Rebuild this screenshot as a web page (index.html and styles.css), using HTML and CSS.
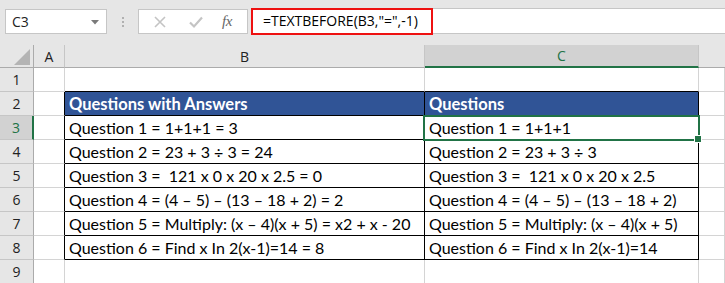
FILE: index.html
```html
<!DOCTYPE html>
<html>
<head>
<meta charset="utf-8">
<link rel="stylesheet" href="styles.css">
</head>
<body>
<div class="app">
  <div class="fbar">
    <div class="namebox"><span class="nb-text">C3</span><svg class="nb-arrow" width="8" height="5" viewBox="0 0 8 5"><path d="M0 0H8L4 4.5Z" fill="#7a7a7a"/></svg></div>
    <div class="grip"><i></i><i></i><i></i></div>
    <div class="fxbox">
      <svg class="ic" width="14" height="14" viewBox="0 0 14 14"><path d="M2 2L12 12M12 2L2 12" stroke="#c4c4c4" stroke-width="1.6"/></svg>
      <svg class="ic" width="16" height="14" viewBox="0 0 16 14"><path d="M2 7.5L6 11.5L14 2.5" stroke="#c4c4c4" stroke-width="2.2" fill="none"/></svg>
      <span class="fx">fx</span>
    </div>
    <div class="finput"><div class="hl">=TEXTBEFORE(B3,"=",-1)</div></div>
  </div>
  <div class="sheet">
    <div class="h corner"><span class="tri"></span></div>
    <div class="h ch">A</div>
    <div class="h ch">B</div>
    <div class="h ch sel">C</div>
    <div class="h ch last"></div>

    <div class="h rh">1</div>
    <div class="c"></div>
    <div class="c bb"></div>
    <div class="c bb"></div>
    <div class="c"></div>

    <div class="h rh">2</div>
    <div class="c br"></div>
    <div class="c t th">Questions with Answers</div>
    <div class="c t th">Questions</div>
    <div class="c"></div>

    <div class="h rh rsel">3</div>
    <div class="c br"></div>
    <div class="c t">Question 1 = 1+1+1 = 3</div>
    <div class="c t active">Question 1 = 1+1+1<span class="handle"></span></div>
    <div class="c"></div>

    <div class="h rh">4</div>
    <div class="c br"></div>
    <div class="c t">Question 2 = 23 + 3 ÷ 3 = 24</div>
    <div class="c t">Question 2 = 23 + 3 ÷ 3</div>
    <div class="c"></div>

    <div class="h rh">5</div>
    <div class="c br"></div>
    <div class="c t">Question 3 =&nbsp; 121 x 0 x 20 x 2.5 = 0</div>
    <div class="c t">Question 3 =&nbsp; 121 x 0 x 20 x 2.5</div>
    <div class="c"></div>

    <div class="h rh">6</div>
    <div class="c br"></div>
    <div class="c t">Question 4 = (4 – 5) – (13 – 18 + 2) = 2</div>
    <div class="c t">Question 4 = (4 – 5) – (13 – 18 + 2)</div>
    <div class="c"></div>

    <div class="h rh">7</div>
    <div class="c br"></div>
    <div class="c t">Question 5 = Multiply: (x – 4)(x + 5) = x2 + x - 20</div>
    <div class="c t">Question 5 = Multiply: (x – 4)(x + 5)</div>
    <div class="c"></div>

    <div class="h rh">8</div>
    <div class="c br"></div>
    <div class="c t">Question 6 = Find x In 2(x-1)=14 = 8</div>
    <div class="c t">Question 6 = Find x In 2(x-1)=14</div>
    <div class="c"></div>

    <div class="h rh">9</div>
    <div class="c"></div>
    <div class="c"></div>
    <div class="c"></div>
    <div class="c"></div>
  </div>
</div>
</body>
</html>
```

FILE: styles.css
```css
* { box-sizing: border-box; }
html, body { margin: 0; padding: 0; background: #fff; overflow: hidden; }
.app { width: 725px; height: 283px; overflow: hidden; font-family: "Segoe UI", "Open Sans", "Liberation Sans", sans-serif; }

.fbar {
  height: 45px;
  background: #e6e6e6;
  display: flex;
  align-items: flex-start;
  padding-top: 9px;
  padding-left: 5px;
}
.namebox {
  width: 102px;
  height: 25px;
  background: #fff;
  border: 1px solid #c6c6c6;
  display: flex;
  align-items: center;
  justify-content: space-between;
  padding: 0 7px 0 6px;
  font-size: 14px;
  color: #222;
}
.nb-arrow { margin-top: 1px; }
.grip {
  width: 31px;
  height: 25px;
  display: flex;
  flex-direction: column;
  align-items: center;
  justify-content: center;
  gap: 2px;
}
.grip i { width: 2px; height: 2px; background: #b0b0b0; display: block; }
.fxbox {
  width: 110px;
  height: 25px;
  background: #fff;
  border: 1px solid #c6c6c6;
  display: flex;
  align-items: center;
  padding-left: 14px;
  gap: 21px;
}
.fx { font-family: "Liberation Serif", serif; font-style: italic; font-size: 15px; color: #666; margin-left: -3px; letter-spacing: -0.5px; }
.finput {
  flex: 1;
  height: 26px;
  margin-left: 3px;
  margin-top: -1px;
  background: #fff;
  border-top: 1px solid #c6c6c6;
  border-bottom: 1px solid #c6c6c6;
  position: relative;
}
.hl {
  position: absolute;
  left: 0;
  top: -1px;
  width: 182px;
  height: 27px;
  border: 2px solid #ee1111;
  font-family: "Segoe UI", "Open Sans", sans-serif;
  font-size: 14px;
  color: #000;
  padding-left: 10px;
  line-height: 22px;
}

.sheet {
  display: grid;
  grid-template-columns: 34px 31px 360px 274px 1fr;
  grid-template-rows: 23px repeat(9, 24px);
  font-family: "Lato", "Carlito", sans-serif;
}
.h {
  background: #e6e6e6;
  border-right: 1px solid #ababab;
  border-bottom: 1px solid #ababab;
  color: #222;
  font-family: "Segoe UI", "Open Sans", sans-serif;
  font-size: 14px;
  display: flex;
  align-items: center;
  justify-content: center;
}
.ch { border-right-color: #c6c6c6; }
.ch.last { border-right: none; }
.rh { border-bottom-color: #c6c6c6; border-right-color: #ababab; }
.corner { position: relative; }
.tri {
  position: absolute;
  right: 3px;
  bottom: 2px;
  width: 0; height: 0;
  border-left: 16px solid transparent;
  border-bottom: 16px solid #b4b4b4;
}
.sel { background: #d2d2d2; color: #217346; border-bottom: 2px solid #217346; }
.rsel { background: #d2d2d2; color: #217346; border-right: 2px solid #217346; }

.c {
  border-right: 1px solid #d4d4d4;
  border-bottom: 1px solid #d4d4d4;
  background: #fff;
}
.c.bb { border-bottom-color: #000; }
.c.br { border-right-color: #000; }
.c.t {
  border-right-color: #000;
  border-bottom-color: #000;
  font-size: 16px;
  color: #000;
  padding-left: 4px;
  display: flex;
  align-items: center;
  white-space: nowrap;
  overflow: hidden;
}
.c.th { background: #305496; color: #fff; font-weight: bold; font-size: 16.5px; }
.active { position: relative; overflow: visible !important; }
.active::after {
  content: "";
  position: absolute;
  left: -2px; top: -1px; right: -2px; bottom: -2px;
  border: 2px solid #217346;
  pointer-events: none;
}
.handle {
  position: absolute;
  right: -4px;
  bottom: -4px;
  width: 6px; height: 6px;
  background: #217346;
  border: 1px solid #fff;
  z-index: 2;
  box-sizing: content-box;
}
```
